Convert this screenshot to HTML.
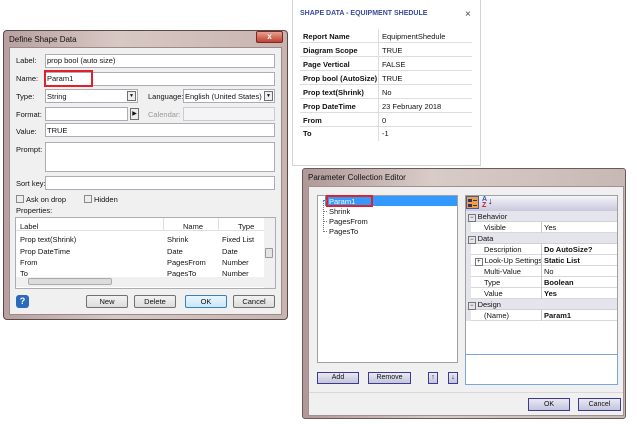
<!DOCTYPE html>
<html><head><meta charset="utf-8"><style>
*{box-sizing:border-box;margin:0;padding:0}
body{width:637px;height:424px;background:#fff;position:relative;overflow:hidden;font-family:"Liberation Sans",sans-serif;font-size:7.5px;color:#111}
.a{position:absolute}
.box{position:absolute;background:#fff;border:1px solid #abadb3}
.t{position:absolute;white-space:nowrap;line-height:9px}
.btn{position:absolute;border:1px solid #707070;border-radius:2px;background:linear-gradient(#f2f2f2,#dcdcdc);text-align:center;line-height:11px;font-size:7.5px}
.pbtn{position:absolute;border:1px solid #3c3c8c;background:linear-gradient(#e8e8f4,#c4c4dc);text-align:center;line-height:10px;font-size:7px}
.row{position:absolute;left:0;right:0;height:14px;border-bottom:1px solid #ddd}
.g{position:absolute;left:5px;right:0;height:11px;border-bottom:1px solid #d8d8d8;background:#fff}
.gc{position:absolute;left:0;right:0;height:11px;background:#e4e4ec;border-bottom:1px solid #d0d0d0}
b{font-weight:bold}
</style></head><body>

<!-- Define Shape Data dialog -->
<div class="a" style="left:3px;top:30px;width:285px;height:290px;background:linear-gradient(90deg,#b8a0a0,#d8c8c4 40%,#c8b4b0);border:1px solid #5a4a4a;border-radius:4px"></div>
<div class="t" style="left:9px;top:35px;font-size:8px">Define Shape Data</div>
<div class="a" style="left:256px;top:31px;width:27px;height:12px;background:linear-gradient(#e8a090,#c04030);border:1px solid #7a2a20;border-radius:2px;color:#fff;text-align:center;font-size:8px;line-height:10px;font-weight:bold">x</div>
<div class="a" style="left:9px;top:47px;width:273px;height:268px;background:#f0f0f0;border:1px solid #9a8a8a"></div>

<div class="t" style="left:16px;top:56px">Label:</div>
<div class="box" style="left:45px;top:54px;width:230px;height:14px"></div>
<div class="t" style="left:47px;top:56px">prop bool (auto size)</div>
<div class="t" style="left:16px;top:74px">Name:</div>
<div class="box" style="left:45px;top:72px;width:230px;height:14px"></div>
<div class="a" style="left:44px;top:70px;width:49px;height:17px;border:2px solid #e0202a"></div>
<div class="t" style="left:47px;top:74px">Param1</div>

<div class="t" style="left:16px;top:92px">Type:</div>
<div class="box" style="left:45px;top:89px;width:93px;height:14px"></div>
<div class="t" style="left:47px;top:92px">String</div>
<div class="a" style="left:127px;top:91px;width:9px;height:10px;border:1px solid #707070;background:#eee;font-size:5px;text-align:center;line-height:8px">▼</div>
<div class="t" style="left:148px;top:92px">Language:</div>
<div class="box" style="left:183px;top:89px;width:92px;height:14px"></div>
<div class="t" style="left:185px;top:92px">English (United States)</div>
<div class="a" style="left:264px;top:91px;width:9px;height:10px;border:1px solid #707070;background:#eee;font-size:5px;text-align:center;line-height:8px">▼</div>

<div class="t" style="left:16px;top:110px">Format:</div>
<div class="box" style="left:45px;top:107px;width:83px;height:14px"></div>
<div class="a" style="left:130px;top:108px;width:9px;height:12px;border:1px solid #707070;background:#eee;font-size:6px;text-align:center;line-height:10px">▶</div>
<div class="t" style="left:148px;top:110px;color:#999">Calendar:</div>
<div class="box" style="left:183px;top:107px;width:92px;height:14px;background:#f4f4f4;border-color:#c8ccd4"></div>

<div class="t" style="left:16px;top:127px">Value:</div>
<div class="box" style="left:45px;top:123px;width:230px;height:14px"></div>
<div class="t" style="left:47px;top:126px">TRUE</div>
<div class="t" style="left:16px;top:145px">Prompt:</div>
<div class="box" style="left:45px;top:142px;width:230px;height:30px"></div>
<div class="t" style="left:16px;top:179px">Sort key:</div>
<div class="box" style="left:45px;top:176px;width:230px;height:14px"></div>

<div class="a" style="left:16px;top:195px;width:8px;height:8px;border:1px solid #8a8a8a;background:#eee"></div>
<div class="t" style="left:26px;top:195px">Ask on drop</div>
<div class="a" style="left:84px;top:195px;width:8px;height:8px;border:1px solid #8a8a8a;background:#eee"></div>
<div class="t" style="left:94px;top:195px">Hidden</div>
<div class="t" style="left:16px;top:206px">Properties:</div>

<div class="box" style="left:15px;top:217px;width:261px;height:72px"></div>
<div class="a" style="left:16px;top:218px;width:248px;height:13px;background:#fff;border-bottom:1px solid #e0e0e0"></div>
<div class="a" style="left:163px;top:218px;width:1px;height:13px;background:#e0e0e0"></div>
<div class="a" style="left:218px;top:218px;width:1px;height:13px;background:#e0e0e0"></div>
<div class="t" style="left:20px;top:222px">Label</div>
<div class="t" style="left:183px;top:222px">Name</div>
<div class="t" style="left:238px;top:222px">Type</div>
<div class="t" style="left:20px;top:235px">Prop text(Shrink)</div><div class="t" style="left:167px;top:235px">Shrink</div><div class="t" style="left:222px;top:235px">Fixed List</div>
<div class="t" style="left:20px;top:247px">Prop DateTime</div><div class="t" style="left:167px;top:247px">Date</div><div class="t" style="left:222px;top:247px">Date</div>
<div class="t" style="left:20px;top:258px">From</div><div class="t" style="left:167px;top:258px">PagesFrom</div><div class="t" style="left:222px;top:258px">Number</div>
<div class="t" style="left:20px;top:269px">To</div><div class="t" style="left:167px;top:269px">PagesTo</div><div class="t" style="left:222px;top:269px">Number</div>
<div class="a" style="left:16px;top:277px;width:248px;height:10px;background:#f0f0f0"></div>
<div class="a" style="left:28px;top:278px;width:84px;height:7px;background:#dcdcdc;border:1px solid #aaa;border-radius:2px"></div>
<div class="a" style="left:264px;top:218px;width:11px;height:70px;background:#f0f0f0"></div>
<div class="a" style="left:265px;top:248px;width:8px;height:10px;background:#e4e4e4;border:1px solid #999;border-radius:1px"></div>

<div class="a" style="left:16px;top:295px;width:13px;height:13px;border-radius:3px;background:#2a6ab8;color:#fff;font-weight:bold;text-align:center;line-height:13px;font-size:9px">?</div>
<div class="btn" style="left:86px;top:295px;width:42px;height:13px">New</div>
<div class="btn" style="left:134px;top:295px;width:42px;height:13px">Delete</div>
<div class="btn" style="left:185px;top:295px;width:42px;height:13px;border-color:#3c7fb1;background:linear-gradient(#eaf6fd,#c8e6f8)">OK</div>
<div class="btn" style="left:233px;top:295px;width:42px;height:13px">Cancel</div>

<!-- Shape Data panel -->
<div class="a" style="left:292px;top:0;width:189px;height:166px;background:#fff;border:1px solid #d4d4d4;border-top:none"></div>
<div class="t" style="left:300px;top:9px;color:#3a4a9a;font-weight:bold;font-size:7px">SHAPE DATA - EQUIPMENT SHEDULE</div>
<div class="t" style="left:465px;top:10px;font-size:10px;color:#444">×</div>
<div class="a" style="left:300px;top:29px;width:172px;height:112px">
 <div class="a" style="left:78px;top:0;width:1px;height:112px;background:#ddd"></div>
 <div class="row" style="top:0"></div><div class="row" style="top:14px"></div><div class="row" style="top:28px"></div><div class="row" style="top:42px"></div><div class="row" style="top:56px"></div><div class="row" style="top:70px"></div><div class="row" style="top:84px"></div>
 <div class="t" style="left:3px;top:3px"><b>Report Name</b></div><div class="t" style="left:82px;top:3px">EquipmentShedule</div>
 <div class="t" style="left:3px;top:17px"><b>Diagram Scope</b></div><div class="t" style="left:82px;top:17px">TRUE</div>
 <div class="t" style="left:3px;top:31px"><b>Page Vertical</b></div><div class="t" style="left:82px;top:31px">FALSE</div>
 <div class="t" style="left:3px;top:45px"><b>Prop bool (AutoSize)</b></div><div class="t" style="left:82px;top:45px">TRUE</div>
 <div class="t" style="left:3px;top:59px"><b>Prop text(Shrink)</b></div><div class="t" style="left:82px;top:59px">No</div>
 <div class="t" style="left:3px;top:73px"><b>Prop DateTime</b></div><div class="t" style="left:82px;top:73px">23 February 2018</div>
 <div class="t" style="left:3px;top:87px"><b>From</b></div><div class="t" style="left:82px;top:87px">0</div>
 <div class="t" style="left:3px;top:100px"><b>To</b></div><div class="t" style="left:82px;top:100px">-1</div>
</div>

<!-- Parameter Collection Editor -->
<div class="a" style="left:302px;top:168px;width:324px;height:251px;background:linear-gradient(90deg,#b09898,#d8ccc8 40%,#c8b8b4);border:1px solid #6a5a5a;border-radius:3px"></div>
<div class="t" style="left:308px;top:173px;font-size:8px">Parameter Collection Editor</div>
<div class="a" style="left:308px;top:186px;width:316px;height:230px;background:#f0f0f0;border:1px solid #a09090"></div>

<div class="box" style="left:317px;top:195px;width:141px;height:168px;border-color:#a0a0a0"></div>
<div class="a" style="left:325px;top:196px;width:132px;height:10px;background:#3399ff"></div>
<div class="a" style="left:326px;top:195px;width:47px;height:12px;border:2px solid #e0202a"></div>
<div class="t" style="left:329px;top:197px;color:#fff">Param1</div>
<div class="a" style="left:323px;top:200px;width:1px;height:32px;border-left:1px dotted #777"></div>
<div class="a" style="left:323px;top:200px;width:4px;border-top:1px dotted #777"></div>
<div class="a" style="left:323px;top:211px;width:4px;border-top:1px dotted #777"></div>
<div class="a" style="left:323px;top:221px;width:4px;border-top:1px dotted #777"></div>
<div class="a" style="left:323px;top:231px;width:4px;border-top:1px dotted #777"></div>
<div class="t" style="left:329px;top:207px">Shrink</div>
<div class="t" style="left:329px;top:217px">PagesFrom</div>
<div class="t" style="left:329px;top:227px">PagesTo</div>

<div class="pbtn" style="left:317px;top:372px;width:42px;height:12px">Add</div>
<div class="pbtn" style="left:368px;top:372px;width:43px;height:12px">Remove</div>
<div class="pbtn" style="left:428px;top:372px;width:10px;height:12px;font-size:7px">↑</div>
<div class="pbtn" style="left:448px;top:372px;width:10px;height:12px;font-size:7px">↓</div>

<!-- property grid -->
<div class="a" style="left:465px;top:195px;width:153px;height:160px;background:#fff;border:1px solid #a0a0a0"></div>
<div class="a" style="left:466px;top:196px;width:151px;height:15px;background:linear-gradient(#f4f4fa,#c8c8dc)"></div>
<div class="a" style="left:466px;top:196px;width:13px;height:13px;background:#f0a040;border:1px solid #4a5aa0"></div>
<div class="a" style="left:468px;top:199px;width:4px;height:3px;background:#336"></div>
<div class="a" style="left:468px;top:204px;width:4px;height:3px;background:#336"></div>
<div class="a" style="left:473px;top:200px;width:4px;height:1px;background:#336"></div>
<div class="a" style="left:473px;top:205px;width:4px;height:1px;background:#336"></div>
<div class="t" style="left:482px;top:197px;font-size:7px;font-weight:bold;color:#2a5ab8;line-height:6px">A<br><span style="color:#c02020">Z</span></div>
<div class="t" style="left:488px;top:197px;font-size:9px">↓</div>
<div class="a" style="left:466px;top:211px;width:151px;height:110px;background:#e4e4ec">
 <div class="gc" style="top:0"></div><div class="t" style="left:2px;top:1px"><span style="font-size:6px;border:1px solid #777;padding:0 1px;line-height:5px">−</span> Behavior</div>
 <div class="g" style="top:11px"></div><div class="t" style="left:18px;top:12px">Visible</div><div class="t" style="left:78px;top:12px">Yes</div>
 <div class="gc" style="top:22px"></div><div class="t" style="left:2px;top:23px"><span style="font-size:6px;border:1px solid #777;padding:0 1px;line-height:5px">−</span> Data</div>
 <div class="g" style="top:33px"></div><div class="t" style="left:18px;top:34px">Description</div><div class="t" style="left:78px;top:34px"><b>Do AutoSize?</b></div>
 <div class="g" style="top:44px"></div><div class="t" style="left:9px;top:45px"><span style="font-size:6px;border:1px solid #777;padding:0 1px;line-height:5px">+</span> Look-Up Settings</div><div class="t" style="left:78px;top:45px"><b>Static List</b></div>
 <div class="g" style="top:55px"></div><div class="t" style="left:18px;top:56px">Multi-Value</div><div class="t" style="left:78px;top:56px">No</div>
 <div class="g" style="top:66px"></div><div class="t" style="left:18px;top:67px">Type</div><div class="t" style="left:78px;top:67px"><b>Boolean</b></div>
 <div class="g" style="top:77px"></div><div class="t" style="left:18px;top:78px">Value</div><div class="t" style="left:78px;top:78px"><b>Yes</b></div>
 <div class="gc" style="top:88px"></div><div class="t" style="left:2px;top:89px"><span style="font-size:6px;border:1px solid #777;padding:0 1px;line-height:5px">−</span> Design</div>
 <div class="g" style="top:99px"></div><div class="t" style="left:18px;top:100px">(Name)</div><div class="t" style="left:78px;top:100px"><b>Param1</b></div>
 <div class="a" style="left:75px;top:11px;width:1px;height:11px;background:#c8c8c8"></div>
 <div class="a" style="left:75px;top:33px;width:1px;height:55px;background:#c8c8c8"></div>
 <div class="a" style="left:75px;top:99px;width:1px;height:11px;background:#c8c8c8"></div>
</div>
<div class="a" style="left:465px;top:354px;width:153px;height:31px;background:#fff;border:1px solid #7aa6d8"></div>

<div class="a" style="left:309px;top:392px;width:314px;height:1px;background:#d8d8d8"></div>
<div class="pbtn" style="left:528px;top:398px;width:42px;height:13px;line-height:11px">OK</div>
<div class="pbtn" style="left:578px;top:398px;width:43px;height:13px;line-height:11px">Cancel</div>
</body></html>
